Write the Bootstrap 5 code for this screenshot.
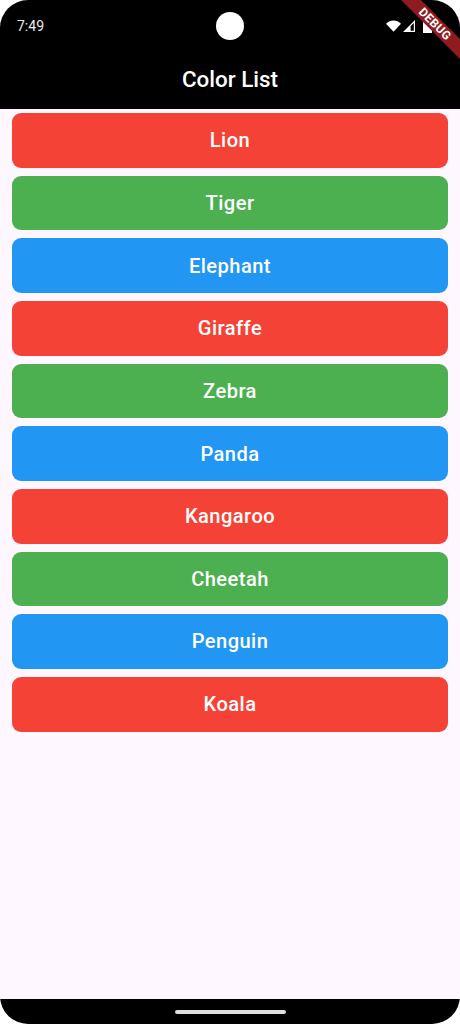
<!doctype html>
<html lang="en">
<head>
<meta charset="utf-8">
<title>Color List</title>
<link href="https://cdn.jsdelivr.net/npm/bootstrap@5.3.0/dist/css/bootstrap.min.css" rel="stylesheet">
<style>
html, body { height: 1024px; background: #fff; overflow: hidden; }
body { font-family: Roboto, "Liberation Sans", sans-serif; }
.device { width: 460px; height: 1024px; border-radius: 28px; overflow: hidden; background: #fef7ff; position: relative; }
.top-bar { background: #000; height: 108.6px; flex: none; position: relative; }
.status-row { height: 52px; padding: 0 28px 0 17px; }
.clock { color: #eaeaea; font-size: 14px; line-height: 1; }
.camera { width: 28px; height: 28px; border-radius: 50%; background: #fff; position: absolute; left: 216px; top: 12px; }
.status-icons { gap: 2px; }
.battery-glyph { margin-left: 6px; }
.page-title { color: #fff; font-size: 22.4px; font-weight: 500; line-height: 54px; height: 56px; text-align: center; }
.animal-list { padding: 4.4px 12px 0; gap: 8px; flex: 1 1 auto; }
.animal-btn { height: 54.67px; flex: none; border-radius: 9px; color: #fff; font-size: 20.1px; font-weight: 500; letter-spacing: .45px; border: 0; padding: 0; width: 100%; }
.animal-btn:hover, .animal-btn:active { color: #fff; }
.tone-red, .tone-red:hover { background: #f44336 !important; }
.tone-green, .tone-green:hover { background: #4caf50 !important; }
.tone-blue, .tone-blue:hover { background: #2196f3 !important; }
.nav-strip { background: #000; height: 25px; flex: none; position: relative; }
.home-pill { width: 111px; height: 4px; border-radius: 2px; background: #e0e0e0; position: absolute; left: 175px; top: 11px; }
.debug-ribbon { position: absolute; top: 16.5px; right: -24px; width: 98px; height: 14px; background: #8e1b1f; color: #fff; font-size: 12px; font-weight: 700; line-height: 14px; text-align: center; transform: rotate(45deg); letter-spacing: .3px; }
</style>
</head>
<body>
<div class="device d-flex flex-column">
  <header class="top-bar">
    <div class="status-row d-flex align-items-center justify-content-between">
      <span class="clock">7:49</span>
      <div class="status-icons d-flex align-items-center">
        <svg width="15" height="12" viewBox="0 0 16 12"><path d="M0 3.5C2 1.3 5 0 8 0s6 1.3 8 3.5L8 12z" fill="#fff"/></svg>
        <svg width="12" height="12" viewBox="0 0 12 12"><path d="M12 0v12H0zM10.8 3 7.6 6.2v4.6h3.2z" fill="#fff" fill-rule="evenodd"/></svg>
        <svg class="battery-glyph" width="9" height="13" viewBox="0 0 9 13"><path d="M2.5 0h4v1H9v12H0V1h2.5z" fill="#fff"/></svg>
      </div>
    </div>
    <span class="camera"></span>
    <div class="page-title">Color List</div>
    <div class="debug-ribbon">DEBUG</div>
  </header>
  <main class="animal-list d-flex flex-column">
    <button type="button" class="btn animal-btn tone-red">Lion</button>
    <button type="button" class="btn animal-btn tone-green">Tiger</button>
    <button type="button" class="btn animal-btn tone-blue">Elephant</button>
    <button type="button" class="btn animal-btn tone-red">Giraffe</button>
    <button type="button" class="btn animal-btn tone-green">Zebra</button>
    <button type="button" class="btn animal-btn tone-blue">Panda</button>
    <button type="button" class="btn animal-btn tone-red">Kangaroo</button>
    <button type="button" class="btn animal-btn tone-green">Cheetah</button>
    <button type="button" class="btn animal-btn tone-blue">Penguin</button>
    <button type="button" class="btn animal-btn tone-red">Koala</button>
  </main>
  <footer class="nav-strip"><span class="home-pill"></span></footer>
</div>
<script src="https://cdn.jsdelivr.net/npm/bootstrap@5.3.0/dist/js/bootstrap.bundle.min.js"></script>
</body>
</html>
